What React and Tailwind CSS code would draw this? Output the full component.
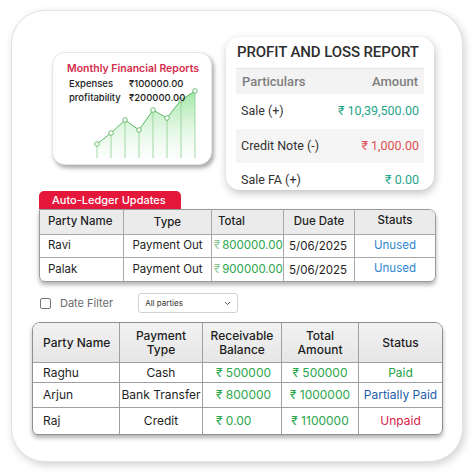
import React from "react";

const ledger = [
  { name: "Ravi", type: "Payment Out", total: "800000.00", due: "5/06/2025", status: "Unused" },
  { name: "Palak", type: "Payment Out", total: "900000.00", due: "5/06/2025", status: "Unused" },
];

const payments = [
  { name: "Raghu", type: "Cash", bal: "₹ 500000", total: "₹ 500000", status: "Paid", color: "text-[#25a244]", h: "h-[20px]" },
  { name: "Arjun", type: "Bank Transfer", bal: "₹ 800000", total: "₹ 1000000", status: "Partially Paid", color: "text-[#1f5ea8]", h: "h-[25px]" },
  { name: "Raj", type: "Credit", bal: "₹ 0.00", total: "₹ 1100000", status: "Unpaid", color: "text-[#d81a46]", h: "h-[26px]" },
];

const pts = [
  [44, 91], [58, 80], [72, 67], [86, 77], [100, 57], [114, 65], [128, 47], [142, 38],
];

const Chart = () => {
  const line = pts.map((p) => p.join(",")).join(" ");
  const area = `44,105 ${line} 142,105`;
  return (
    <svg className="absolute left-0 top-0" width="160" height="113" viewBox="0 0 160 113">
      <defs>
        <linearGradient id="g" x1="0" y1="0" x2="0" y2="1">
          <stop offset="0" stopColor="#7fdc84" stopOpacity="0.75" />
          <stop offset="1" stopColor="#d9f5da" stopOpacity="0.1" />
        </linearGradient>
      </defs>
      <polygon points={area} fill="url(#g)" />
      {pts.map(([x, y], i) => (
        <line key={i} x1={x} y1={y} x2={x} y2="105" stroke="#8fcf92" strokeWidth="0.8" />
      ))}
      <polyline points={line} fill="none" stroke="#5cb865" strokeWidth="1" />
      {pts.map(([x, y], i) => (
        <circle key={i} cx={x} cy={y} r="2.3" fill="#fff" stroke="#5cb865" strokeWidth="0.9" />
      ))}
    </svg>
  );
};

const App = () => {
  return (
    <div className="w-[474px] h-[474px] bg-white pt-[10px] pl-[11px] font-['Inter',sans-serif]">
      <div className="w-[452px] h-[452px] rounded-[34px] border border-[#e2e2e2] bg-white shadow-[2px_3px_8px_rgba(0,0,0,0.18)] flex flex-col">
        <div className="flex items-start mt-[26px]">
          <div className="relative ml-[40px] mt-[15px] w-[160px] h-[113px] rounded-[13px] border border-[#e6e6e6] bg-white shadow-[2px_3px_4px_rgba(0,0,0,0.35)]">
            <Chart />
            <div className="relative pl-[14px] pt-[9px] text-[10.5px] font-semibold text-[#d52d4b] leading-[14px]">
              Monthly Financial Reports
            </div>
            <div className="relative pl-[16px] mt-[1px] text-[9.5px] font-medium text-[#222] leading-[14px]">
              <div className="flex"><span className="w-[60px]">Expenses</span><span>₹100000.00</span></div>
              <div className="flex"><span className="w-[60px]">profitability</span><span>₹200000.00</span></div>
            </div>
          </div>
          <div className="ml-[14px] w-[208px] h-[153px] rounded-[14px] bg-white shadow-[1px_3px_8px_rgba(0,0,0,0.25)] overflow-hidden px-[10px] font-['Roboto',sans-serif]">
            <div className="h-[32px] border-b border-[#e4e4e4] flex items-center pl-[1px] text-[15px] font-medium text-[#2e2e2e] tracking-[-0.1px]">
              PROFIT AND LOSS REPORT
            </div>
            <div className="h-[25px] bg-[#f3f3f3] flex items-center justify-between px-[6px] text-[13px] font-medium text-[#7e7e7e]">
              <span>Particulars</span>
              <span>Amount</span>
            </div>
            <div className="h-[35px] flex items-center justify-between px-[5px] text-[12.5px] text-[#333]">
              <span>Sale (+)</span>
              <span className="text-[#1fa58b]">₹ 10,39,500.00</span>
            </div>
            <div className="h-[34px] bg-[#f5f5f5] flex items-center justify-between px-[5px] text-[12.5px] text-[#333]">
              <span>Credit Note (-)</span>
              <span className="text-[#e04e52]">₹ 1,000.00</span>
            </div>
            <div className="h-[34px] flex items-center justify-between px-[5px] text-[12.5px] text-[#333]">
              <span>Sale FA (+)</span>
              <span className="text-[#1fa58b]">₹ 0.00</span>
            </div>
          </div>
        </div>

        <div className="ml-[27px] mt-[1px] w-[397px]">
          <div className="w-[142px] h-[18px] rounded-t-[5px] bg-[#e5173b] text-white text-[11px] font-medium flex items-center pl-[13px]">
            Auto-Ledger Updates
          </div>
          <div className="border border-[#9a9a9a] rounded-tr-[7px] rounded-b-[6px] overflow-hidden shadow-[0_3px_4px_rgba(0,0,0,0.3)] text-[11.5px] text-[#1e1e1e]">
            <div className="grid grid-cols-[84px_88px_72px_71px_1fr] h-[25px] bg-[#ebebeb] font-medium border-b border-[#a8a8a8]">
              <div className="flex items-center pl-[8px] border-r border-[#a8a8a8]">Party Name</div>
              <div className="flex items-center justify-center pt-[2px] border-r border-[#a8a8a8]">Type</div>
              <div className="flex items-center pl-[6px] border-r border-[#a8a8a8]">Total</div>
              <div className="flex items-center justify-center border-r border-[#a8a8a8]">Due Date</div>
              <div className="flex items-center justify-center pb-[2px]">Stauts</div>
            </div>
            {ledger.map((r, i) => (
              <div key={r.name} className={`grid grid-cols-[84px_88px_72px_71px_1fr] h-[23px] ${i === 0 ? "border-b border-[#a8a8a8]" : ""}`}>
                <div className="flex items-center pl-[8px] border-r border-[#a8a8a8]">{r.name}</div>
                <div className="flex items-center justify-center border-r border-[#a8a8a8]">{r.type}</div>
                <div className="flex items-center pl-[2px] border-r border-[#a8a8a8] whitespace-nowrap overflow-hidden text-[#2aa64b]">
                  <span className="text-[#8fc79a] mr-[2px]">₹</span>{r.total}
                </div>
                <div className="flex items-center pl-[5px] pt-[2px] border-r border-[#a8a8a8]">{r.due}</div>
                <div className="flex items-center justify-center pb-[1px] text-[#2d86d1]">{r.status}</div>
              </div>
            ))}
          </div>
        </div>

        <div className="flex items-center ml-[28px] mt-[11px] h-[20px]">
          <div className="w-[11px] h-[11px] border border-[#777] rounded-[2px]" />
          <span className="ml-[9px] text-[11px] text-[#6a6a6a]">Date Filter</span>
          <div className="ml-[25px] w-[100px] h-[20px] border border-[#d2d2d2] rounded-[3px] flex items-center justify-between px-[6px] text-[8px] text-[#333]">
            <span>All parties</span>
            <svg width="7" height="5" viewBox="0 0 7 5"><path d="M1 1l2.5 2.5L6 1" fill="none" stroke="#555" strokeWidth="1" /></svg>
          </div>
        </div>

        <div className="ml-[20px] mt-[9px] w-[411px] border border-[#8f8f8f] rounded-t-[8px] rounded-b-[6px] overflow-hidden shadow-[0_3px_4px_rgba(0,0,0,0.3)] text-[12px] text-[#1e1e1e]">
          <div className="grid grid-cols-[87px_83px_79px_77px_1fr] h-[40px] bg-gradient-to-b from-[#f2f2f2] to-[#e6e6e6] font-medium border-b border-[#a0a0a0] leading-[14px]">
            <div className="flex items-center pl-[10px] border-r border-[#a0a0a0]">Party Name</div>
            <div className="flex items-center justify-center text-center border-r border-[#a0a0a0]">Payment<br />Type</div>
            <div className="flex items-center justify-center text-center border-r border-[#a0a0a0]">Receivable<br />Balance</div>
            <div className="flex items-center justify-center text-center border-r border-[#a0a0a0]">Total<br />Amount</div>
            <div className="flex items-center justify-center">Status</div>
          </div>
          {payments.map((r, i) => (
            <div key={r.name} className={`grid grid-cols-[87px_83px_79px_77px_1fr] ${r.h} ${i < 2 ? "border-b border-[#a0a0a0]" : ""}`}>
              <div className="flex items-center pl-[10px] border-r border-[#a0a0a0]">{r.name}</div>
              <div className="flex items-center justify-center border-r border-[#a0a0a0] whitespace-nowrap">{r.type}</div>
              <div className="flex items-center pl-[13px] border-r border-[#a0a0a0] text-[#2aa64b] whitespace-nowrap">{r.bal}</div>
              <div className="flex items-center justify-center border-r border-[#a0a0a0] text-[#2aa64b] whitespace-nowrap">{r.total}</div>
              <div className={`flex items-center justify-center whitespace-nowrap ${r.color}`}>{r.status}</div>
            </div>
          ))}
        </div>
      </div>
    </div>
  );
};

export default App;
